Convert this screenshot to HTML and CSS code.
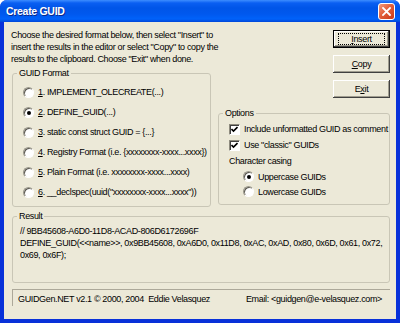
FILE: index.html
```html
<!DOCTYPE html>
<html lang="en">
  <head>
    <meta charset="utf-8">
    <title>Create GUID</title>
    <link rel="stylesheet" href="styles.css">
  </head>
  <body>

  <div class="window">
    <div class="titlebar">
      <span class="title">Create GUID</span>
      <span class="close">
        <svg width="9" height="9" viewBox="0 0 9 9"><path d="M1 1 L8 8 M8 1 L1 8" stroke="#fff" stroke-width="1.8" stroke-linecap="square"/></svg>
      </span>
    </div>

    <div class="client">
      <div class="top">
        <div class="left">
          <p class="intro">Choose the desired format below, then select "Insert" to<br>insert the results in the editor or select "Copy" to copy the<br>results to the clipboard. Choose "Exit" when done.</p>

          <fieldset class="group format">
            <legend>GUID Format</legend>
            <div class="radios">
              <div class="row"><span class="radio"></span><u>1</u>. IMPLEMENT_OLECREATE(...)</div>
              <div class="row"><span class="radio on"></span><u>2</u>. DEFINE_GUID(...)</div>
              <div class="row"><span class="radio"></span><u>3</u>. static const struct GUID = {...}</div>
              <div class="row"><span class="radio"></span><u>4</u>. Registry Format (i.e. {xxxxxxxx-xxxx...xxxx})</div>
              <div class="row"><span class="radio"></span><u>5</u>. Plain Format (i.e. xxxxxxxx-xxxx...xxxx)</div>
              <div class="row"><span class="radio"></span><u>6</u>. __declspec(uuid("xxxxxxxx-xxxx...xxxx"))</div>
            </div>
          </fieldset>
        </div>

        <div class="right">
          <div class="buttons">
            <span class="btn default"><span class="focus"><u>I</u>nsert</span></span>
            <span class="btn"><u>C</u>opy</span>
            <span class="btn">E<u>x</u>it</span>
          </div>

          <fieldset class="group options">
            <legend>Options</legend>
            <div class="opts">
              <div class="crow"><span class="check"><svg width="7" height="7" viewBox="0 0 7 7"><path d="M0.5 3 L2.5 5 L6.5 1" stroke="#000" stroke-width="1.6" fill="none"/></svg></span>Include unformatted GUID as comment</div>
              <div class="crow"><span class="check"><svg width="7" height="7" viewBox="0 0 7 7"><path d="M0.5 3 L2.5 5 L6.5 1" stroke="#000" stroke-width="1.6" fill="none"/></svg></span>Use "classic" GUIDs</div>
              <div class="caption">Character casing</div>
              <div class="srow"><span class="radio on"></span>Uppercase GUIDs</div>
              <div class="srow"><span class="radio"></span>Lowercase GUIDs</div>
            </div>
          </fieldset>
        </div>
      </div>

      <fieldset class="group result">
        <legend>Result</legend>
        <pre class="output">// 9BB45608-A6D0-11D8-ACAD-806D6172696F
DEFINE_GUID(&lt;&lt;name&gt;&gt;, 0x9BB45608, 0xA6D0, 0x11D8, 0xAC, 0xAD, 0x80, 0x6D, 0x61, 0x72,
0x69, 0x6F);</pre>
      </fieldset>

      <div class="status">
        <span>GUIDGen.NET v2.1 &copy; 2000, 2004&nbsp; Eddie Velasquez</span>
        <span>Email: &lt;guidgen@e-velasquez.com&gt;</span>
      </div>
    </div>
  </div>

  </body>
</html>
```

FILE: styles.css
```css
html, body {
  margin: 0;
  padding: 0;
  background: #ffffff;
}

.window {
  width: 400px;
  height: 323px;
  box-sizing: border-box;
  display: flex;
  flex-direction: column;
  background: #0831d9;
  border-radius: 7px 7px 0 0;
  overflow: hidden;
  font-family: "Liberation Sans", Arial, sans-serif;
  font-size: 9px;
  letter-spacing: -0.35px;
  line-height: 12px;
  color: #000000;
}

.titlebar {
  height: 22px;
  flex: none;
  display: flex;
  align-items: center;
  justify-content: space-between;
  padding: 0 5px 0 6px;
  background: linear-gradient(to bottom, #3d8dff 0, #0a5ff2 3px, #0055e8 8px, #0058ee 14px, #0062fa 19px, #0046d8 22px);
}

.title {
  color: #ffffff;
  font-weight: bold;
  font-size: 10.5px;
  letter-spacing: -0.3px;
  text-shadow: 1px 1px 0 #0b2a8a;
}

.close {
  width: 15px;
  height: 15px;
  display: flex;
  align-items: center;
  justify-content: center;
  border: 1px solid #ffffff;
  border-radius: 3px;
  background: linear-gradient(135deg, #f09a7f 0, #e2603b 45%, #c8391a 100%);
}

.client {
  flex: 1;
  margin: 0 4px 4px 4px;
  background: #ece9d8;
  padding: 7px 6px 0 8px;
  display: flex;
  flex-direction: column;
}

.top {
  display: flex;
  gap: 7px;
}

.left {
  width: 199px;
  flex: none;
}

.intro {
  margin: 0 0 2px -1px;
  white-space: nowrap;
}

.group {
  margin: 0;
  padding: 0;
  border: 1px solid #c9c6b6;
  border-radius: 3px;
  min-width: 0;
}

.group legend {
  margin-left: 4px;
  padding: 0 2px;
  line-height: 12px;
}

.radios {
  padding: 3px 0 4px 10px;
}

.row {
  height: 20px;
  display: flex;
  align-items: center;
  white-space: nowrap;
}

.radio {
  width: 9px;
  height: 9px;
  flex: none;
  margin-right: 4px;
  border-radius: 50%;
  border: 1px solid;
  border-color: #9a978a #ffffff #ffffff #9a978a;
  background: #ffffff;
  box-shadow: inset 1px 1px 0 #5c5a52;
  position: relative;
}

.radio.on::after {
  content: "";
  position: absolute;
  left: 3px;
  top: 3px;
  width: 4px;
  height: 4px;
  border-radius: 50%;
  background: #000000;
}

.right {
  flex: 1;
  min-width: 0;
  display: flex;
  flex-direction: column;
}

.buttons {
  display: flex;
  flex-direction: column;
  align-items: flex-end;
  gap: 7px;
  margin-top: 1px;
}

.btn {
  width: 57px;
  height: 18px;
  box-sizing: border-box;
  display: flex;
  align-items: center;
  justify-content: center;
  background: #ece9d8;
  box-shadow: inset -1px -1px 0 #404040, inset 1px 1px 0 #ffffff, inset -2px -2px 0 #a09d8f;
}

.btn.default {
  border: 1px solid #000000;
}

.focus {
  width: 45px;
  height: 10px;
  line-height: 10px;
  text-align: center;
  border: 1px dotted #000000;
}

.options {
  margin-top: 9px;
}

.opts {
  padding: 2px 0 5px 10px;
}

.crow {
  height: 16px;
  display: flex;
  align-items: center;
  white-space: nowrap;
}

.check {
  width: 9px;
  height: 9px;
  flex: none;
  margin-right: 4px;
  display: flex;
  align-items: center;
  justify-content: center;
  background: #ffffff;
  border: 1px solid;
  border-color: #8e8b7e #ffffff #ffffff #8e8b7e;
  box-shadow: inset 1px 1px 0 #404040;
}

.caption {
  height: 16px;
  display: flex;
  align-items: center;
}

.srow {
  height: 15px;
  display: flex;
  align-items: center;
  padding-left: 14px;
}

.result {
  margin-top: 3px;
}

.output {
  margin: 0;
  padding: 3px 0 21px 7px;
  font: inherit;
  white-space: pre;
}

.status {
  margin-top: 6px;
  height: 17px;
  box-sizing: border-box;
  border-top: 1px solid #aca899;
  border-left: 1px solid #aca899;
  display: flex;
  justify-content: space-between;
  align-items: center;
  white-space: nowrap;
  padding: 2px 8px 0 5px;
}
```
